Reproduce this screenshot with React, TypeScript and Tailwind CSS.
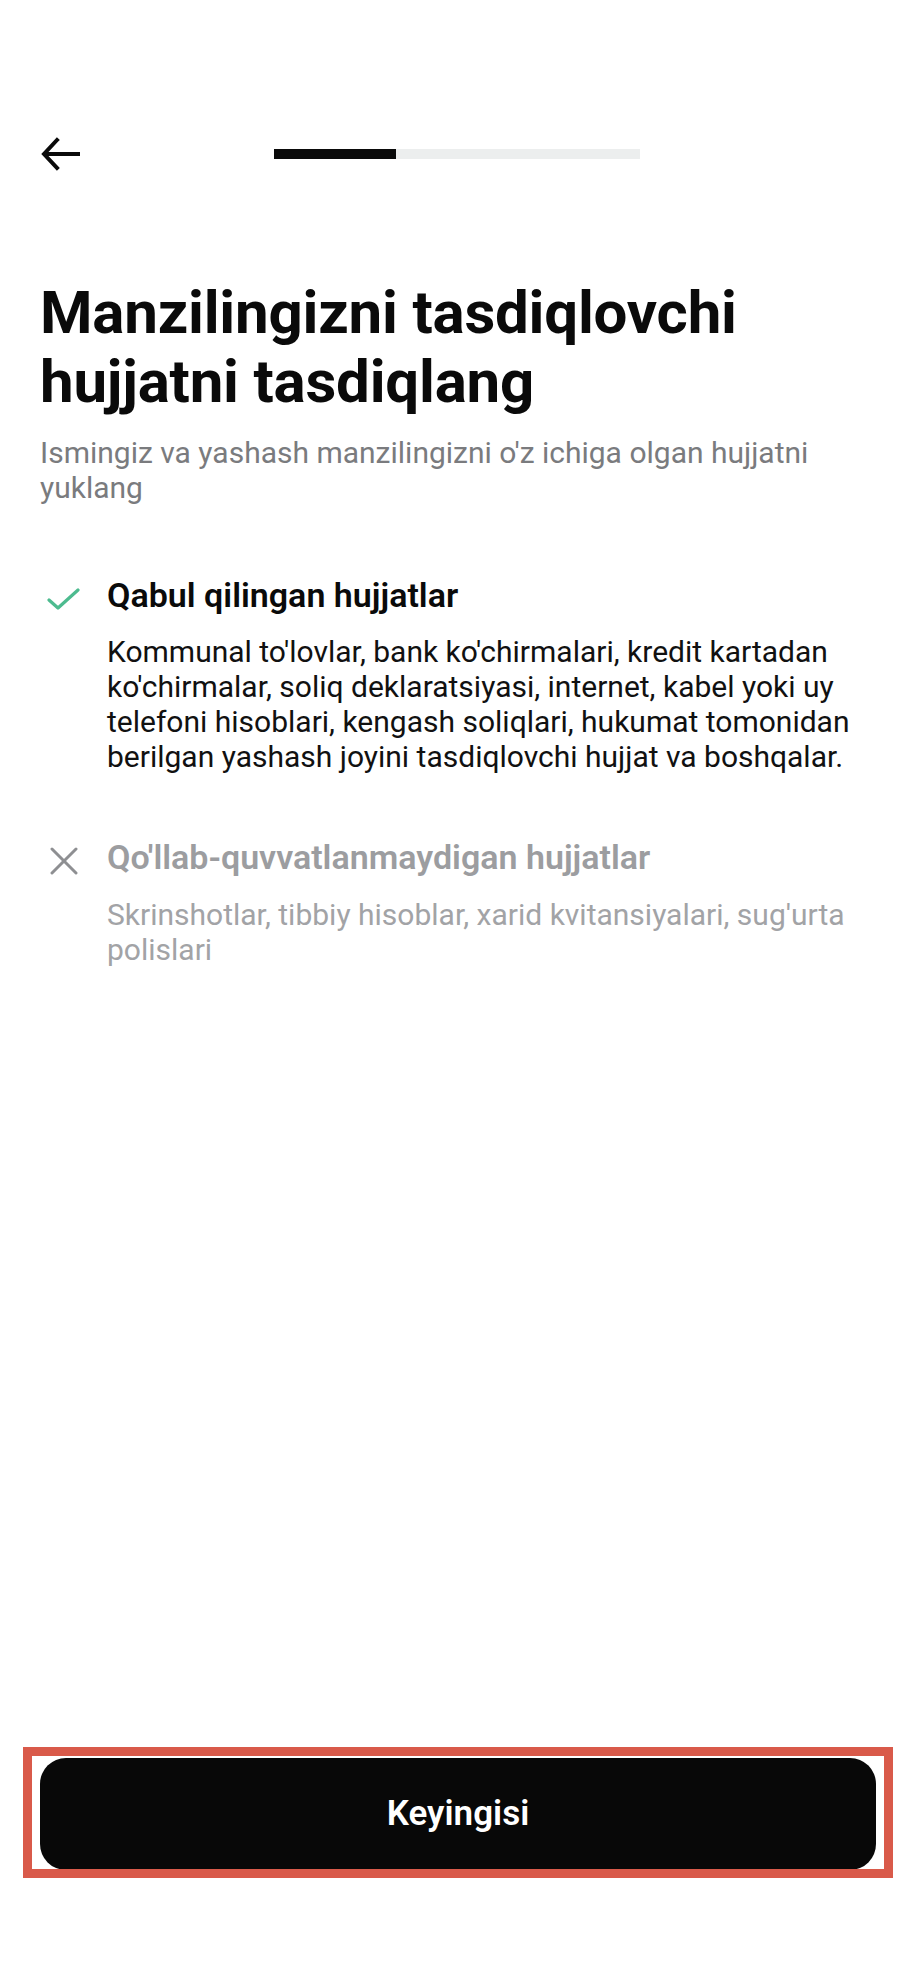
import React from "react";

const font = { fontFamily: "Roboto, 'Noto Sans', 'Liberation Sans', sans-serif" };

function BackArrow() {
  return (
    <svg width="40" height="34" viewBox="0 0 40 34" fill="none" stroke="#0a0a0a" strokeWidth="4" strokeLinecap="square">
      <path d="M4 17 H37" />
      <path d="M16 3 L3 17 L16 31" strokeLinejoin="miter" />
    </svg>
  );
}

function CheckIcon() {
  return (
    <svg width="34" height="24" viewBox="0 0 34 24" fill="none" stroke="#4dbb8f" strokeWidth="3.2" strokeLinecap="round" strokeLinejoin="round">
      <path d="M2 13 L11 21 L31 3" />
    </svg>
  );
}

function CrossIcon() {
  return (
    <svg width="28" height="28" viewBox="0 0 28 28" fill="none" stroke="#8e8f92" strokeWidth="3" strokeLinecap="round">
      <path d="M2 2 L26 26" />
      <path d="M26 2 L2 26" />
    </svg>
  );
}

export default function App() {
  return (
    <div className="flex flex-col h-[1978px] w-full bg-white" style={font}>
      {/* top bar */}
      <div className="grid grid-cols-[1fr_366px_1fr] items-center h-[56px] mt-[126px]">
        <div className="pl-[41px] flex items-center">
          <BackArrow />
        </div>
        <div className="flex h-[10px] bg-[#eceeee]">
          <div className="w-1/3 bg-[#0a0a0a]" />
        </div>
        <div />
      </div>

      <div className="px-[40px]">
        <h1 className="mt-[96px] text-[60px] leading-[69px] font-bold text-[#0a0a0a] tracking-[-0.2px]">
          Manzilingizni tasdiqlovchi hujjatni tasdiqlang
        </h1>
        <p className="mt-[19px] text-[30px] leading-[35px] text-[#7a7b7e]">
          Ismingiz va yashash manzilingizni o'z ichiga olgan hujjatni yuklang
        </p>

        {/* accepted */}
        <div className="flex mt-[70px]">
          <div className="w-[67px] shrink-0 pt-[12px] pl-[7px]">
            <CheckIcon />
          </div>
          <div className="flex-1">
            <h2 className="text-[34px] leading-[40px] font-semibold text-[#0a0a0a]">Qabul qilingan hujjatlar</h2>
            <p className="mt-[19px] text-[30px] leading-[35px] text-[#111111]">
              Kommunal to'lovlar, bank ko'chirmalari, kredit kartadan ko'chirmalar, soliq deklaratsiyasi, internet, kabel yoki uy telefoni hisoblari, kengash soliqlari, hukumat tomonidan berilgan yashash joyini tasdiqlovchi hujjat va boshqalar.
            </p>
          </div>
        </div>

        {/* not supported */}
        <div className="flex mt-[63px]">
          <div className="w-[67px] shrink-0 pt-[10px] pl-[10px]">
            <CrossIcon />
          </div>
          <div className="flex-1">
            <h2 className="text-[34px] leading-[40px] font-semibold text-[#9c9da0]">Qo'llab-quvvatlanmaydigan hujjatlar</h2>
            <p className="mt-[20px] text-[30px] leading-[35px] text-[#a2a3a6]">
              Skrinshotlar, tibbiy hisoblar, xarid kvitansiyalari, sug'urta polislari
            </p>
          </div>
        </div>
      </div>

      {/* bottom button */}
      <div className="mt-auto mb-[108px] pl-[40px] pr-[38px]">
        <div className="relative">
          <button className="w-full h-[112px] rounded-[26px] bg-[#080808] text-white text-[35px] font-semibold">
            Keyingisi
          </button>
          <div className="absolute left-[-17px] right-[-17px] top-[-11px] bottom-[-8px] border-[9px] border-[#d95a4a] pointer-events-none" />
        </div>
      </div>
    </div>
  );
}
